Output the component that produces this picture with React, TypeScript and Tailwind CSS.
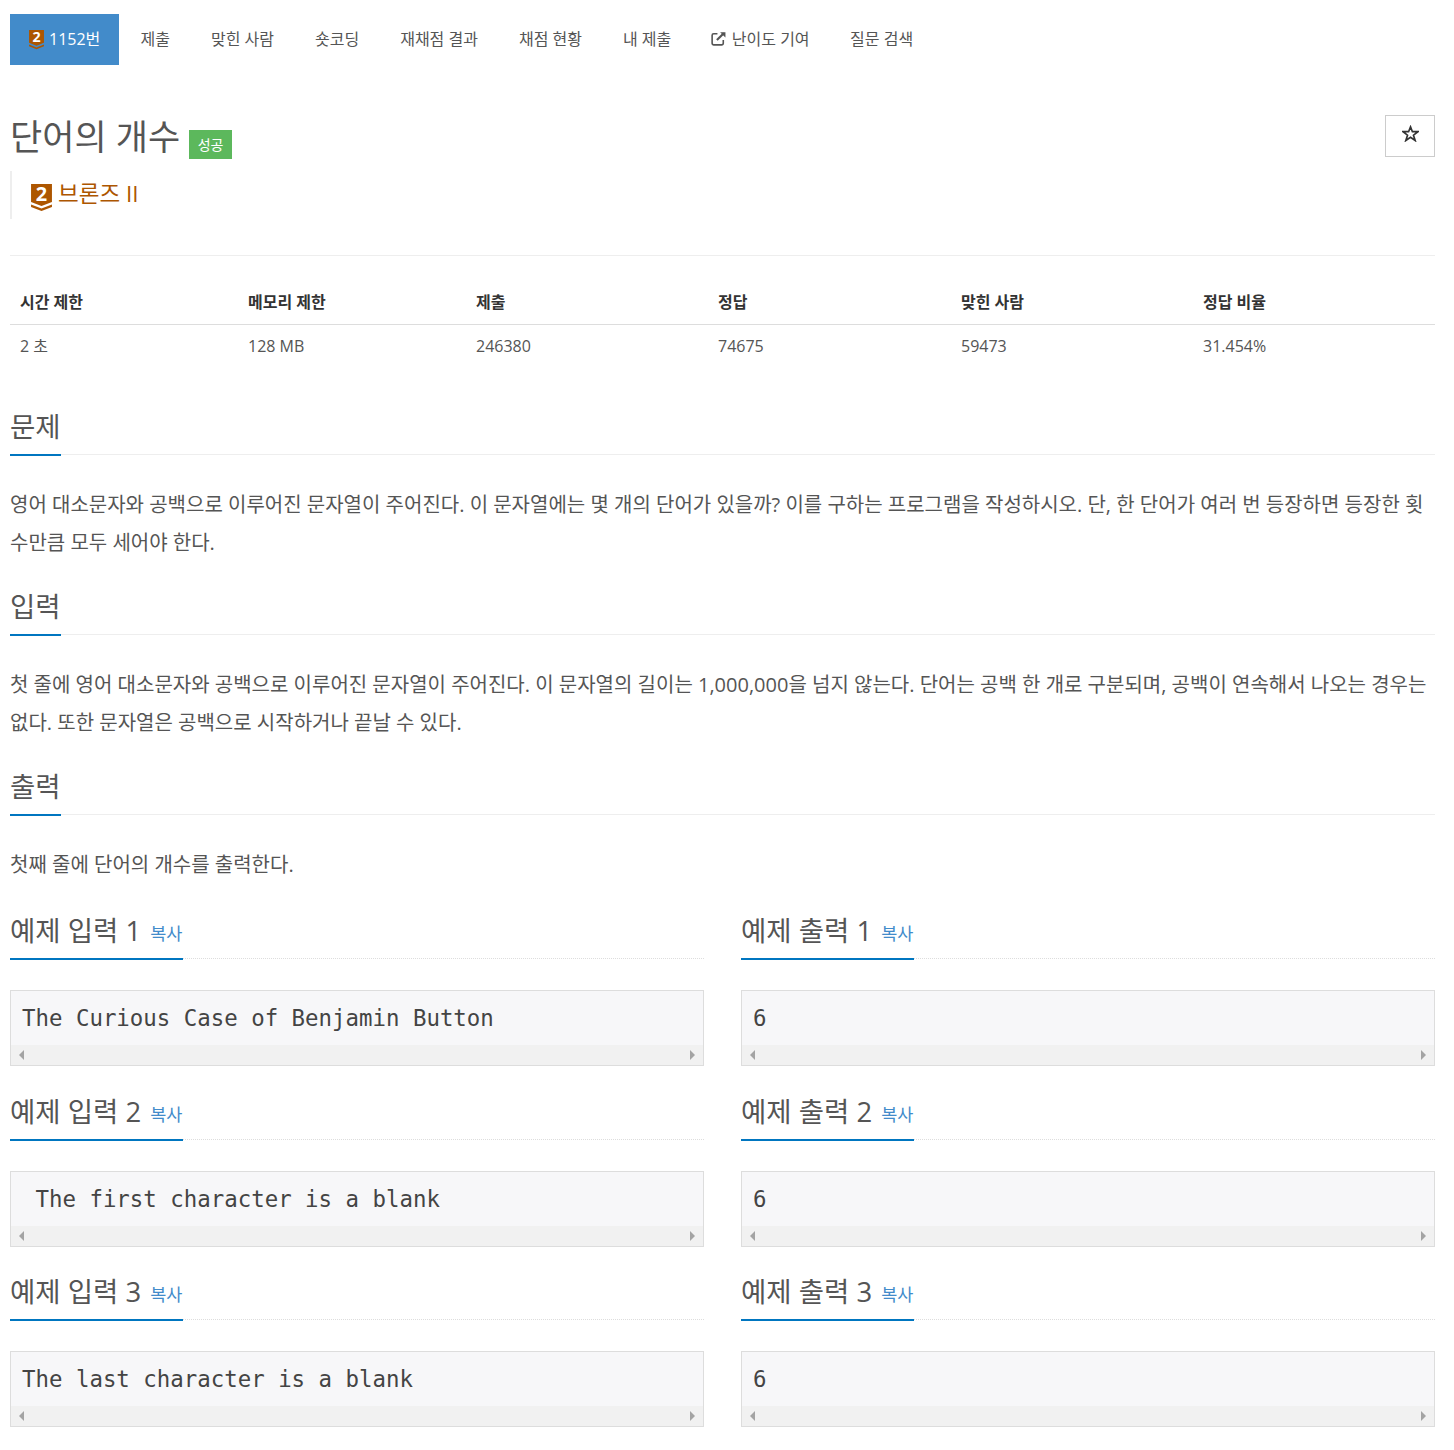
const sans = { fontFamily: '"Open Sans","Noto Sans CJK KR",sans-serif' };

function Tier({ size, digit }: { size: number; digit: number }) {
  return (
    <svg width={size} height={size * 1.28} viewBox="0 0 21 27" className="shrink-0 overflow-visible">
      <path d="M0 0H21V18L10.5 22L0 18Z" fill="#ad5600" />
      <path d="M0 20.5L10.5 24.5L21 20.5V23L10.5 27L0 23Z" fill="#ad5600" />
      <text x="10.5" y="17" textAnchor="middle" fontSize="20" fontWeight="700" fill="#fff" style={sans}>{digit}</text>
    </svg>
  );
}

const navItems = ["제출", "맞힌 사람", "숏코딩", "재채점 결과", "채점 현황", "내 제출"];

function Nav() {
  return (
    <nav className="flex h-[51px] text-[16px] text-[#555]">
      <div className="flex items-center gap-[5px] bg-[#428bca] pl-[19px] w-[109px] mr-[1px] text-white">
        <Tier size={15} digit={2} />
        <span className="mt-[-2px]">1152번</span>
      </div>
      {navItems.map((t) => (
        <div key={t} className="flex items-center px-[20.5px] pb-[2px]">{t}</div>
      ))}
      <div className="flex items-center pl-[18px] pr-[20px] pb-[2px]">
        <svg width="17" height="17" viewBox="0 0 16 16" fill="none" stroke="#555" strokeWidth="1.5" className="mr-[5px]">
          <path d="M12.5 9.5V12.5A1.5 1.5 0 0 1 11 14H3.5A1.5 1.5 0 0 1 2 12.5V5A1.5 1.5 0 0 1 3.5 3.5H7" />
          <path d="M6.5 9.5L13 3" strokeWidth="2" />
          <path d="M9.5 2H14.5V7Z" fill="#555" stroke="none" />
        </svg>
        난이도 기여
      </div>
      <div className="flex items-center px-[20.5px] pb-[2px]">질문 검색</div>
    </nav>
  );
}

function Heading({ children }: { children: React.ReactNode }) {
  return (
    <div className="border-b border-[#eee] h-[65px] flex flex-col justify-end">
      <div className="flex w-[51px] whitespace-nowrap border-b-2 border-[#0076c0] -mb-[2px] pb-[5px] h-[60px] items-end">
        <h2 className="text-[#555] text-[27.5px] leading-[44px]">{children}</h2>
      </div>
    </div>
  );
}

function Section({ title, children }: { title: string; children: React.ReactNode }) {
  return (
    <section>
      <Heading>{title}</Heading>
      <p className="text-[20px] leading-[38px] text-[#555] mt-[31px] mb-[-1px]">{children}</p>
    </section>
  );
}

function Sample({ title, text }: { title: string; text: string }) {
  return (
    <div className="h-[180.5px]">
      <div className="border-b border-dotted border-[#ddd] h-[54px] relative">
        <div className="absolute left-0 bottom-[-2px] border-b-2 border-[#0076c0] h-[55px] w-[173px] flex items-start whitespace-nowrap">
          <span className="text-[27.5px] leading-[44px] text-[#555] mt-[4px]">{title}</span>
          <span className="text-[17.5px] leading-[22px] text-[#428bca] ml-[9px] mt-[17px]">복사</span>
        </div>
      </div>
      <div className="mt-[31px] border border-[#ddd] bg-[#f7f7f9]">
        <pre
          className="h-[54px] px-[11px] pt-[11px] text-[#444] text-[22.4px] leading-[32px] whitespace-pre"
          style={{ fontFamily: '"DejaVu Sans Mono",monospace' }}
        >{text}</pre>
        <div className="h-[20px] bg-[#f1f1f1] flex items-center justify-between px-[8px]">
          <span className="w-0 h-0 border-y-[5px] border-y-transparent border-r-[5px] border-r-[#a3a3a3]" />
          <span className="w-0 h-0 border-y-[5px] border-y-transparent border-l-[5px] border-l-[#a3a3a3]" />
        </div>
      </div>
    </div>
  );
}

const stats = [
  ["시간 제한", "2 초", "w-[238px]"],
  ["메모리 제한", "128 MB", "w-[228px]"],
  ["제출", "246380", "w-[242px]"],
  ["정답", "74675", "w-[243px]"],
  ["맞힌 사람", "59473", "w-[242px]"],
  ["정답 비율", "31.454%", "flex-1"],
];

export default function App() {
  const samples = [
    ["The Curious Case of Benjamin Button", "6"],
    [" The first character is a blank", "6"],
    ["The last character is a blank", "6"],
  ];
  return (
    <div className="w-[1425px] ml-[10px] pt-[14px] pb-[10px]" style={sans}>
      <Nav />
      <div className="flex items-start justify-between mt-[50px]">
        <div className="flex items-center h-[42px]">
          <h1 className="text-[35px] leading-[42px] text-[#555] mt-[2px]">단어의 개수</h1>
          <span className="ml-[9px] mt-[17px] bg-[#5cb85c] text-white text-[14px] w-[43px] h-[29px] flex items-center justify-center">성공</span>
        </div>
        <button className="w-[50px] h-[42px] border border-[#ccc] flex items-center justify-center pb-[6px]">
          <svg width="17" height="17" viewBox="0 0 16 16" fill="none" stroke="#333" strokeWidth="1.6" strokeLinejoin="miter">
            <path d="M8 1.8L9.8 6.3H15L10.8 9.6L12.4 14.6L8 11.6L3.6 14.6L5.2 9.6L1 6.3H6.2Z" />
          </svg>
        </button>
      </div>
      <div className="mt-[14px] h-[48px] border-l-2 border-[#eee] pl-[19px] flex items-center gap-[6px] text-[22.5px] text-[#ad5600]">
        <span className="mt-[5px]"><Tier size={21} digit={2} /></span>
        <span className="mt-[-2px]">브론즈 II</span>
      </div>
      <div className="mt-[36px] border-t border-[#eee]" />
      <div className="mt-[27px] text-[16px] text-[#555]">
        <div className="flex border-b border-[#ddd] h-[42px] font-bold text-[#333]">
          {stats.map(([h, , w]) => (
            <div key={h} className={`${w} ${h === "시간 제한" ? "pl-[10px]" : ""} h-[37px] flex items-center`}>{h}</div>
          ))}
        </div>
        <div className="flex h-[43px]">
          {stats.map(([h, v, w]) => (
            <div key={h} className={`${w} ${h === "시간 제한" ? "pl-[10px]" : ""} pb-[2px] flex items-center`}>{v}</div>
          ))}
        </div>
      </div>
      <div className="mt-[22px]">
        <Section title="문제">영어 대소문자와 공백으로 이루어진 문자열이 주어진다. 이 문자열에는 몇 개의 단어가 있을까? 이를 구하는 프로그램을 작성하시오. 단, 한 단어가 여러 번 등장하면 등장한 횟수만큼 모두 세어야 한다.</Section>
        <div className="mt-[9px]" />
        <Section title="입력">첫 줄에 영어 대소문자와 공백으로 이루어진 문자열이 주어진다. 이 문자열의 길이는 1,000,000을 넘지 않는다. 단어는 공백 한 개로 구분되며, 공백이 연속해서 나오는 경우는 없다. 또한 문자열은 공백으로 시작하거나 끝날 수 있다.</Section>
        <div className="mt-[9px]" />
        <Section title="출력">첫째 줄에 단어의 개수를 출력한다.</Section>
      </div>
      <div className="grid grid-cols-2 gap-x-[37px] mt-[22px]">
        {samples.map(([a, b], i) => [
          <Sample key={"i" + i} title={`예제 입력 ${i + 1}`} text={a} />,
          <Sample key={"o" + i} title={`예제 출력 ${i + 1}`} text={b} />,
        ])}
      </div>
    </div>
  );
}
